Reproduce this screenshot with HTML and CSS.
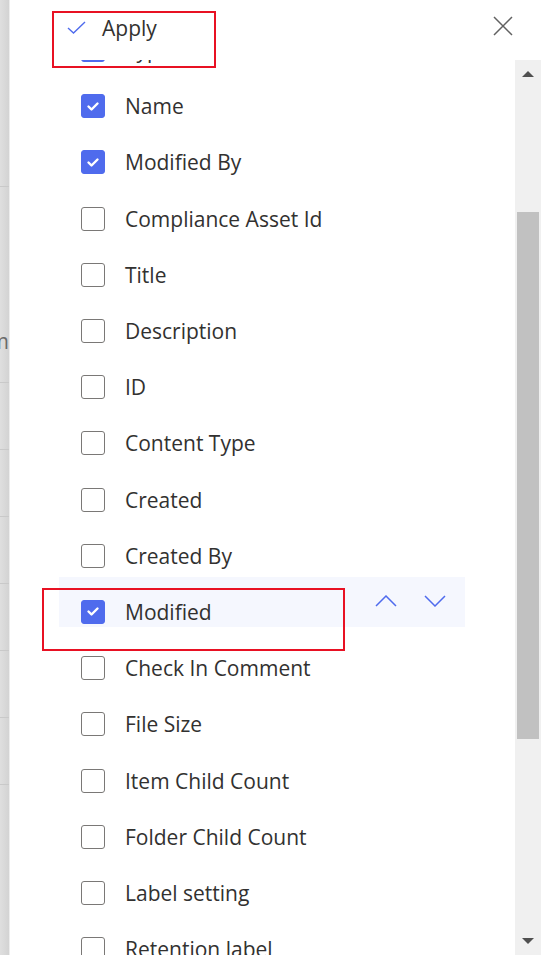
FILE: index.html
```html
<!DOCTYPE html>
<html lang="en">
<head>
    <meta charset="UTF-8">
    <meta name="viewport" content="width=device-width, initial-scale=1.0">
    <title>Edit view columns</title>
    <link rel="stylesheet" href="styles.css">
</head>
<body>
<div class="page-edge">
    <div class="edge-row edge-top"></div>
    <div class="edge-row edge-tall"><span class="edge-text">Custom</span></div>
    <div class="edge-row"></div>
    <div class="edge-row"></div>
    <div class="edge-row"></div>
    <div class="edge-row"></div>
    <div class="edge-row"></div>
    <div class="edge-row"></div>
</div>

<div class="panel">
    <div class="header">
        <button type="button" class="apply-btn">
            <svg class="apply-icon" width="19" height="13" viewBox="0 0 19 13">
                <path d="M1 7 L6.5 12 L18 1" fill="none" stroke="#4f6bed" stroke-width="1.4"/>
            </svg>
            <span>Apply</span>
        </button>
        <button type="button" class="close-btn" aria-label="Close">
            <svg width="20" height="20" viewBox="0 0 20 20">
                <path d="M1 1 L19 19 M19 1 L1 19" stroke="#616161" stroke-width="1.5"/>
            </svg>
        </button>
    </div>

    <div class="body">
        <div class="list">
            <ul class="columns" id="columns"></ul>
        </div>
        <div class="scrollbar">
            <span class="arrow-up"></span>
            <div class="thumb"></div>
            <span class="arrow-down"></span>
        </div>
    </div>

    <!-- red annotation boxes from the screenshot -->
    <div class="mark mark-apply"></div>
    <div class="mark mark-modified"></div>
</div>

<script>
// column list, in display order
const columns = [
    { name: 'Type', checked: true },
    { name: 'Name', checked: true },
    { name: 'Modified By', checked: true },
    { name: 'Compliance Asset Id' },
    { name: 'Title' },
    { name: 'Description' },
    { name: 'ID' },
    { name: 'Content Type' },
    { name: 'Created' },
    { name: 'Created By' },
    { name: 'Modified', checked: true, active: true },
    { name: 'Check In Comment' },
    { name: 'File Size' },
    { name: 'Item Child Count' },
    { name: 'Folder Child Count' },
    { name: 'Label setting' },
    { name: 'Retention label' }
];

const tick = '<svg width="14" height="11" viewBox="0 0 14 11"><path d="M2.5 5.5 L5.5 8.5 L11.5 2.5" fill="none" stroke="#fff" stroke-width="2.4" stroke-linecap="round" stroke-linejoin="round"/></svg>';
const chevronUp = '<svg width="22" height="12" viewBox="0 0 22 12"><path d="M1 11 L11 1 L21 11" fill="none" stroke="#4f6bed" stroke-width="1.5"/></svg>';
const chevronDown = '<svg width="22" height="12" viewBox="0 0 22 12"><path d="M1 1 L11 11 L21 1" fill="none" stroke="#4f6bed" stroke-width="1.5"/></svg>';

const list = document.getElementById('columns');
list.innerHTML = columns.map(col => `
    <li class="row${col.active ? ' active' : ''}">
        <span class="checkbox${col.checked ? ' checked' : ''}">${col.checked ? tick : ''}</span>
        <span class="label">${col.name}</span>
        ${col.active ? `<span class="move"><button type="button">${chevronUp}</button><button type="button">${chevronDown}</button></span>` : ''}
    </li>`).join('');
</script>
</body>
</html>
```

FILE: styles.css
```css
html, body {
    margin: 0;
    height: 100%;
}
body {
    display: flex;
    overflow: hidden;
    background: #fff;
    font-family: "Open Sans", "Noto Sans", sans-serif;
    color: #323130;
}
button {
    font: inherit;
    color: inherit;
    background: none;
    border: 0;
    padding: 0;
    cursor: pointer;
}

/* page behind the panel */
.page-edge {
    width: 9px;
    flex-shrink: 0;
    background: linear-gradient(to right, #dfdfdf, #d3d3d3);
    border-right: 1px solid #ededed;
}
.edge-row {
    height: 66px;
    border-bottom: 1px solid #c9c9c9;
    display: flex;
    justify-content: flex-end;
    overflow: hidden;
}
.edge-top {
    height: 186px;
}
.edge-tall {
    height: 195px;
    align-items: flex-end;
}
.edge-text {
    font-size: 21px;
    color: #6a6a6a;
    white-space: nowrap;
    line-height: 1;
    margin-bottom: 30px;
}

/* panel */
.panel {
    flex: 1;
    display: flex;
    flex-direction: column;
    position: relative;
    min-width: 0;
}
.header {
    height: 60px;
    flex-shrink: 0;
    display: flex;
    align-items: center;
    justify-content: space-between;
    padding: 0 29px 0 57px;
    background: #fff;
    position: relative;
    z-index: 1;
}
.apply-btn {
    display: flex;
    align-items: center;
    gap: 16px;
    font-size: 21px;
    margin-top: -4px;
}
.apply-icon {
    margin-top: -2px;
}
.close-btn {
    width: 20px;
    height: 20px;
    margin-top: -9px;
    margin-right: -1px;
}
.close-btn svg {
    display: block;
}

.body {
    flex: 1;
    display: flex;
    min-height: 0;
}
.list {
    flex: 1;
    overflow: hidden;
}
.columns {
    list-style: none;
    margin: -38px 0 0;
    padding: 0;
}
.row {
    box-sizing: border-box;
    height: 56.2px;
    width: 406px;
    margin-left: 49px;
    padding-left: 22px;
    display: flex;
    align-items: center;
    gap: 20px;
    font-size: 21px;
    white-space: nowrap;
}
.row.active {
    height: 63.2px;
    margin-top: -7px;
    padding-top: 7px;
    background: linear-gradient(#f5f7fe, #f5f7fe) 0 0 / 100% 50px no-repeat;
}
.checkbox {
    box-sizing: border-box;
    width: 24px;
    height: 24px;
    flex-shrink: 0;
    border: 1px solid #7a7876;
    border-radius: 3px;
    display: flex;
    align-items: center;
    justify-content: center;
}
.checkbox.checked {
    background: #4f6bed;
    border-color: #4f6bed;
}
.checkbox svg {
    display: block;
}
.label {
    line-height: 1;
    margin-top: 1px;
}
.move {
    margin-left: auto;
    padding-right: 19px;
    align-self: flex-start;
    margin-top: 5px;
    display: flex;
    gap: 27px;
}
.move button {
    width: 22px;
    height: 24px;
    display: flex;
    align-items: center;
}

/* fake scrollbar */
.scrollbar {
    width: 26px;
    flex-shrink: 0;
    background: #f0f0f0;
    display: flex;
    flex-direction: column;
    align-items: center;
}
.arrow-up,
.arrow-down {
    width: 0;
    height: 0;
    border-left: 6px solid transparent;
    border-right: 6px solid transparent;
}
.arrow-up {
    border-bottom: 6px solid #505050;
    margin-top: 11px;
}
.arrow-down {
    border-top: 6px solid #505050;
    margin-top: auto;
    margin-bottom: 11px;
}
.thumb {
    width: 22px;
    height: 527px;
    margin-top: 135px;
    background: #c1c1c1;
}

/* annotations */
.mark {
    position: absolute;
    box-sizing: border-box;
    border: 2px solid #e81123;
    z-index: 2;
}
.mark-apply {
    left: 42px;
    top: 11px;
    width: 164px;
    height: 57px;
}
.mark-modified {
    left: 32px;
    top: 588px;
    width: 303px;
    height: 63px;
}
```
